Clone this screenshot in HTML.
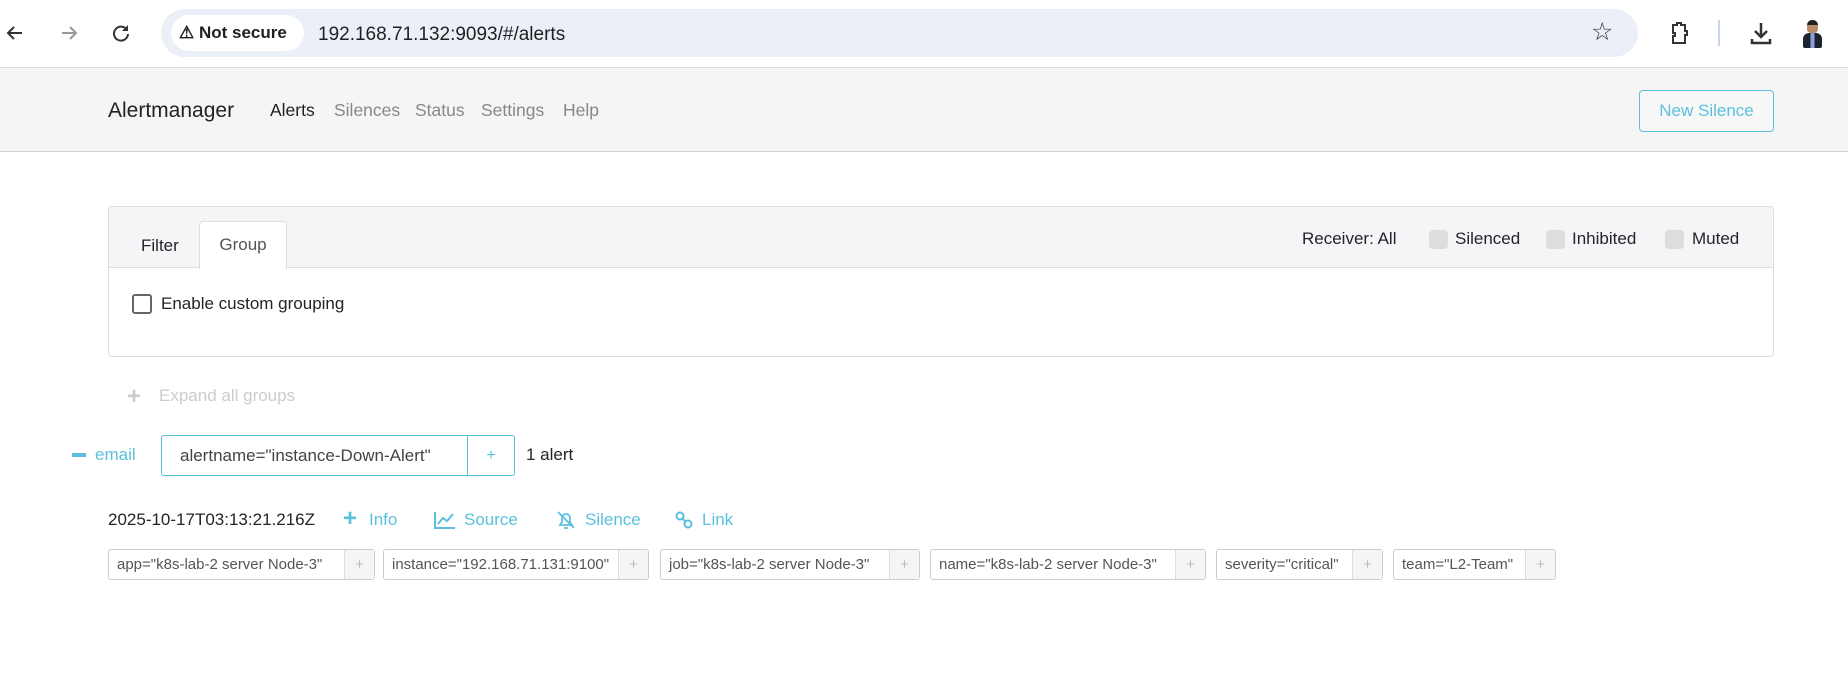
<!DOCTYPE html>
<html><head><meta charset="utf-8"><style>
*{box-sizing:border-box;margin:0;padding:0}
body{width:1848px;height:676px;background:#fff;font-family:"Liberation Sans",sans-serif;color:#212529;position:relative;overflow:hidden}
.a{position:absolute;white-space:nowrap}
.chrome{left:0;top:0;width:1848px;height:67px;background:#fff}
.addr{left:161px;top:9px;width:1477px;height:48px;border-radius:24px;background:#ebf0f8}
.ns{left:171px;top:15px;width:133px;height:36px;border-radius:18px;background:#fff;font-size:17px;font-weight:bold;line-height:36px;padding-left:8px;color:#1f1f1f}
.hdr{left:0;top:67px;width:1848px;height:85px;background:#f5f5f5;border-top:1px solid #ddd;border-bottom:1px solid #d5d5d5}
.nav{font-size:17.5px;color:#888;top:100px}
.btn{left:1639px;top:90px;width:135px;height:42px;border:1px solid #5bc0de;border-radius:4px;color:#5bc0de;font-size:17px;line-height:40px;text-align:center;background:#f7f7f7}
.card{left:108px;top:206px;width:1666px;height:151px;border:1px solid #ddd;border-radius:4px;overflow:hidden}
.ch{left:0;top:0;width:1664px;height:61px;background:#f5f5f7;border-bottom:1px solid #ddd}
.tab{left:90px;top:14px;width:88px;height:48px;background:#fff;border:1px solid #ddd;border-bottom:none;border-radius:4px 4px 0 0;font-size:17px;color:#555;text-align:center;line-height:46px}
.t17{font-size:17px}
.gcb{width:19px;height:19px;background:#ddd;border-radius:4px}
.chip{top:549px;height:31px;border:1px solid #ccc;border-radius:3px;display:flex;font-size:15px;color:#555}
.chip span{padding:0 8px;line-height:29px;flex:1}
.chip b{font-weight:normal;width:30px;border-left:1px solid #ddd;background:#f5f5f5;color:#bbb;text-align:center;line-height:29px}
.blue{color:#5bc0de}
</style></head><body>
<div class="a chrome"></div>
<svg class="a" style="left:4px;top:22px" width="22" height="22" viewBox="0 0 22 22"><path d="M18 11H4M10 5L4 11l6 6" stroke="#333" stroke-width="2" fill="none"/></svg>
<svg class="a" style="left:58px;top:22px" width="22" height="22" viewBox="0 0 22 22"><path d="M4 11h14M12 5l6 6-6 6" stroke="#999" stroke-width="2" fill="none"/></svg>
<svg class="a" style="left:110px;top:22px" width="22" height="22" viewBox="0 0 22 22"><path d="M17 8A7 7 0 1 0 18 12" stroke="#333" stroke-width="2" fill="none"/><path d="M18 3v6h-6" fill="#333"/></svg>
<div class="a addr"></div>
<div class="a ns">⚠ Not secure</div>
<div class="a" style="left:318px;top:24px;font-size:19px;color:#1f1f1f">192.168.71.132:9093/#/alerts</div>
<div class="a" style="left:1591px;top:17px;font-size:25px;color:#333">☆</div>
<svg class="a" style="left:1668px;top:20px" width="24" height="26" viewBox="0 0 24 26"><path d="M5 5h4V3h4v2h4v6h2v4h-2v8H5v-7h2v-3H5z" stroke="#333" stroke-width="2" fill="none"/></svg>
<div class="a" style="left:1718px;top:20px;width:2px;height:26px;background:#c8d6ea"></div>
<svg class="a" style="left:1748px;top:20px" width="26" height="26" viewBox="0 0 26 26"><path d="M13 3v14M7 11l6 6 6-6M4 19v4h18v-4" stroke="#333" stroke-width="2.5" fill="none"/></svg>
<div class="a" style="left:1807px;top:20px;width:11px;height:13px;border-radius:5px 5px 4px 4px;background:linear-gradient(#222 0 40%,#b88a6a 40%)"></div>
<div class="a" style="left:1803px;top:33px;width:19px;height:15px;border-radius:6px 6px 2px 2px;background:linear-gradient(90deg,#1d2330 40%,#8ea0d8 40% 60%,#1d2330 60%)"></div>
<div class="a hdr"></div>
<div class="a" style="left:108px;top:99px;font-size:21px;color:#222">Alertmanager</div>
<div class="a nav" style="left:270px;color:#222">Alerts</div>
<div class="a nav" style="left:334px">Silences</div>
<div class="a nav" style="left:415px">Status</div>
<div class="a nav" style="left:481px">Settings</div>
<div class="a nav" style="left:563px">Help</div>
<div class="a btn">New Silence</div>
<div class="a card">
 <div class="a ch"></div>
 <div class="a t17" style="left:32px;top:29px">Filter</div>
 <div class="a tab">Group</div>
 <div class="a" style="left:23px;top:87px;width:20px;height:20px;border:2px solid #666;border-radius:3px"></div>
 <div class="a t17" style="left:52px;top:87px">Enable custom grouping</div>
 <div class="a t17" style="left:1193px;top:22px">Receiver: All</div>
 <div class="a gcb" style="left:1320px;top:23px"></div><div class="a t17" style="left:1346px;top:22px">Silenced</div>
 <div class="a gcb" style="left:1437px;top:23px"></div><div class="a t17" style="left:1463px;top:22px">Inhibited</div>
 <div class="a gcb" style="left:1556px;top:23px"></div><div class="a t17" style="left:1583px;top:22px">Muted</div>
</div>
<div class="a" style="left:127px;top:383px;font-size:24px;font-weight:bold;color:#ccc">+</div>
<div class="a t17" style="left:159px;top:386px;color:#ccc">Expand all groups</div>
<div class="a" style="left:72px;top:453px;width:14px;height:4px;background:#5bc0de"></div>
<div class="a t17 blue" style="left:95px;top:445px">email</div>
<div class="a" style="left:161px;top:435px;width:354px;height:41px;border:1px solid #5bc0de;border-radius:3px;display:flex">
 <span style="flex:1;padding-left:18px;line-height:39px;font-size:17px;color:#444">alertname="instance-Down-Alert"</span>
 <b style="width:47px;border-left:1px solid #5bc0de;text-align:center;line-height:39px;color:#5bc0de;font-weight:normal">+</b>
</div>
<div class="a t17" style="left:526px;top:445px">1 alert</div>
<div class="a t17" style="left:108px;top:510px">2025-10-17T03:13:21.216Z</div>
<div class="a blue" style="left:343px;top:505px;font-size:24px;font-weight:bold">+</div>
<div class="a t17 blue" style="left:369px;top:510px">Info</div>
<svg class="a" style="left:434px;top:511px" width="22" height="18" viewBox="0 0 22 18"><path d="M1 1v16h20M4 13l5-6 4 3 6-7" stroke="#5bc0de" stroke-width="2" fill="none"/></svg>
<div class="a t17 blue" style="left:464px;top:510px">Source</div>
<svg class="a" style="left:555px;top:509px" width="22" height="22" viewBox="0 0 22 22"><path d="M5 16h12l-2-3V9a4 4 0 0 0-8 0v4zM9 19h4M3 3l16 16" stroke="#5bc0de" stroke-width="1.8" fill="none"/></svg>
<div class="a t17 blue" style="left:585px;top:510px">Silence</div>
<svg class="a" style="left:675px;top:511px" width="18" height="18" viewBox="0 0 18 18"><circle cx="5" cy="5" r="3.5" stroke="#5bc0de" stroke-width="2" fill="none"/><circle cx="13" cy="13" r="3.5" stroke="#5bc0de" stroke-width="2" fill="none"/><path d="M7 7l4 4" stroke="#5bc0de" stroke-width="2"/></svg>
<div class="a t17 blue" style="left:702px;top:510px">Link</div>
<div class="a chip" style="left:108px;width:267px"><span>app="k8s-lab-2 server Node-3"</span><b>+</b></div>
<div class="a chip" style="left:383px;width:266px"><span>instance="192.168.71.131:9100"</span><b>+</b></div>
<div class="a chip" style="left:660px;width:260px"><span>job="k8s-lab-2 server Node-3"</span><b>+</b></div>
<div class="a chip" style="left:930px;width:276px"><span>name="k8s-lab-2 server Node-3"</span><b>+</b></div>
<div class="a chip" style="left:1216px;width:167px"><span>severity="critical"</span><b>+</b></div>
<div class="a chip" style="left:1393px;width:163px"><span>team="L2-Team"</span><b>+</b></div>
</body></html>
